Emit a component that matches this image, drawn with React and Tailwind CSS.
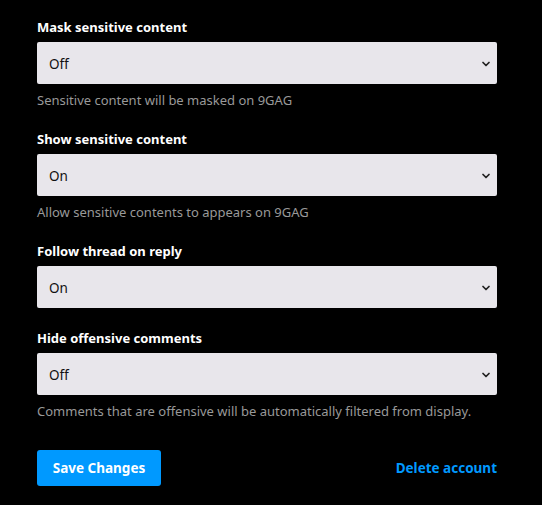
import { ChevronDown } from 'lucide-react'

const fields = [
  { label: 'Mask sensitive content', value: 'Off', help: 'Sensitive content will be masked on 9GAG' },
  { label: 'Show sensitive content', value: 'On', help: 'Allow sensitive contents to appears on 9GAG' },
  { label: 'Follow thread on reply', value: 'On' },
  { label: 'Hide offensive comments', value: 'Off', help: 'Comments that are offensive will be automatically filtered from display.' },
]

function Field({ label, value, help }) {
  return (
    <div className="mb-[21px]">
      <label className="block text-[13px] leading-[18px] font-bold text-white mb-[6px]">{label}</label>
      <div className="relative">
        <select
          defaultValue={value}
          className="appearance-none w-full h-[42px] rounded-[2px] bg-[#e8e6eb] text-[#111] text-[13.5px] pl-3 pr-8 pt-[3px] outline-none"
        >
          <option>Off</option>
          <option>On</option>
        </select>
        <ChevronDown className="absolute right-[5px] top-1/2 -translate-y-1/2 mt-[1px] w-[12px] h-[12px] text-[#222] pointer-events-none" strokeWidth={3.5} />
      </div>
      {help && <p className="mt-[7px] text-[13px] leading-[18px] text-[#999]">{help}</p>}
    </div>
  )
}

export default function App() {
  return (
    <div className="min-h-screen bg-black font-['Noto_Sans',sans-serif]">
      <div className="w-[460px] ml-[37px] pt-[18px]">
        {fields.map(f => <Field key={f.label} {...f} />)}
        <div className="flex items-center justify-between mt-[30px]">
          <button className="h-[36px] w-[124px] rounded-[3px] bg-[#0099ff] text-white text-[13.5px] font-bold">Save Changes</button>
          <a href="#" className="text-[13.5px] font-bold text-[#0099ff]">Delete account</a>
        </div>
      </div>
    </div>
  )
}
